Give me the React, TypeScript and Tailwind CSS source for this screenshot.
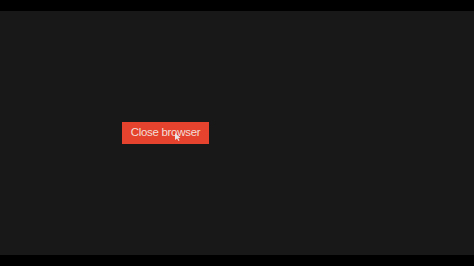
export default function App() {
  return (
    <div className="w-[474px] h-[266px] bg-black flex flex-col pt-[11px] font-['Liberation_Sans',Arial,sans-serif]">
      <div className="h-[244px] bg-[#181818] pl-[122px] pt-[111px]">
        <button className="relative h-[22px] w-[87px] bg-[#e5432d] text-[#f3ded8] text-[11.5px] tracking-[-0.3px] flex items-center justify-center">
          Close browser
          {/* mouse pointer over the button */}
          <svg className="absolute left-[53px] top-[11px]" width="6" height="8" viewBox="0 0 6 8">
            <path d="M0 0 L0 7 L2 5.5 L3.5 8 L4.5 7.5 L3.2 5 L5.5 5 Z" fill="#e8e8e8" />
          </svg>
        </button>
      </div>
    </div>
  );
}
